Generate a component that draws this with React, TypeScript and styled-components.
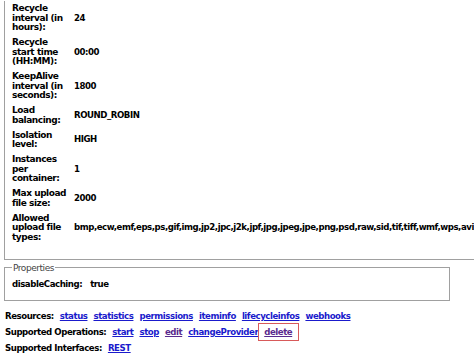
import React from "react";
import styled, { createGlobalStyle } from "styled-components";

const GlobalStyle = createGlobalStyle`
  html, body {
    margin: 0;
    padding: 0;
    background: #ffffff;
    overflow: hidden;
  }
  body {
    font-family: "DejaVu Sans", Verdana, sans-serif;
    font-size: 8.6px;
    letter-spacing: -0.45px;
    color: #000000;
  }
`;

const Page = styled.div`
  width: 474px;
  height: 354px;
  overflow: hidden;
  padding-left: 4px;
`;

const InfoBox = styled.div`
  width: 560px;
  margin-top: 1px;
  border: 1px solid #a0a0a0;
  border-top: none;
  padding: 0 0 14px 7px;
`;

const InfoTable = styled.table`
  border-collapse: collapse;
  table-layout: fixed;
  > tbody > tr > td {
    font-weight: bold;
    line-height: 9.5px;
    padding: 3px 0 2.5px 0;
    vertical-align: middle;
  }
  > tbody > tr > td.label {
    font-size: 9px;
    width: 58px;
    min-width: 58px;
    padding-right: 4px;
  }
  > tbody > tr > td.value {
    white-space: nowrap;
  }
`;

const PropsBox = styled.fieldset`
  width: 446px;
  box-sizing: border-box;
  margin: 3px 0 0 0;
  padding: 5px 7px 10px 7px;
  border: 1px solid #a0a0a0;
  > legend {
    color: #444444;
    font-size: 9px;
    font-weight: normal;
    padding: 0 1px;
    margin-left: 0;
  }
`;

const PropRow = styled.div`
  font-weight: bold;
  line-height: 12px;
  > span {
    margin-left: 8px;
  }
`;

const Lines = styled.div`
  margin-top: 7px;
  margin-left: 1px;
`;

const Line = styled.div`
  font-weight: bold;
  line-height: 16px;
  white-space: nowrap;
`;

const Label = styled.span`
  margin-right: 0;
`;

const Link = styled.a<{ $visited?: boolean }>`
  color: ${(p) => (p.$visited ? "#5a2a8e" : "#1a1acc")};
  text-decoration: underline;
  cursor: pointer;
  margin-left: 6px;
`;

const Marked = styled.span`
  border: 1.5px solid #d85a5a;
  padding: 3px 6px 3px 0;
  margin-left: 0;
  > a {
    margin-left: 5px;
  }
`;

const rows: [string, string][] = [
  ["Recycle interval (in hours):", "24"],
  ["Recycle start time (HH:MM):", "00:00"],
  ["KeepAlive interval (in seconds):", "1800"],
  ["Load balancing:", "ROUND_ROBIN"],
  ["Isolation level:", "HIGH"],
  ["Instances per container:", "1"],
  ["Max upload file size:", "2000"],
  [
    "Allowed upload file types:",
    "bmp,ecw,emf,eps,ps,gif,img,jp2,jpc,j2k,jpf,jpg,jpeg,jpe,png,psd,raw,sid,tif,tiff,wmf,wps,avi,mpg,mpeg,mp1,mp2,mp3",
  ],
];

const resources = ["status", "statistics", "permissions", "iteminfo", "lifecycleinfos", "webhooks"];

export default function App() {
  return (
    <Page>
      <GlobalStyle />
      <InfoBox>
        <InfoTable>
          <tbody>
            {rows.map(([k, v]) => (
              <tr key={k}>
                <td className="label">{k}</td>
                <td className="value">{v}</td>
              </tr>
            ))}
          </tbody>
        </InfoTable>
      </InfoBox>

      <PropsBox>
        <legend>Properties</legend>
        <PropRow>
          disableCaching:<span>true</span>
        </PropRow>
      </PropsBox>

      <Lines>
        <Line>
          <Label>Resources:</Label>
          {resources.map((r) => (
            <Link key={r}>{r}</Link>
          ))}
        </Line>
        <Line>
          <Label>Supported Operations:</Label>
          <Link>start</Link>
          <Link>stop</Link>
          <Link $visited>edit</Link>
          <Link>changeProvider</Link>
          <Marked>
            <Link $visited>delete</Link>
          </Marked>
        </Line>
        <Line>
          <Label>Supported Interfaces:</Label>
          <Link>REST</Link>
        </Line>
      </Lines>
    </Page>
  );
}
